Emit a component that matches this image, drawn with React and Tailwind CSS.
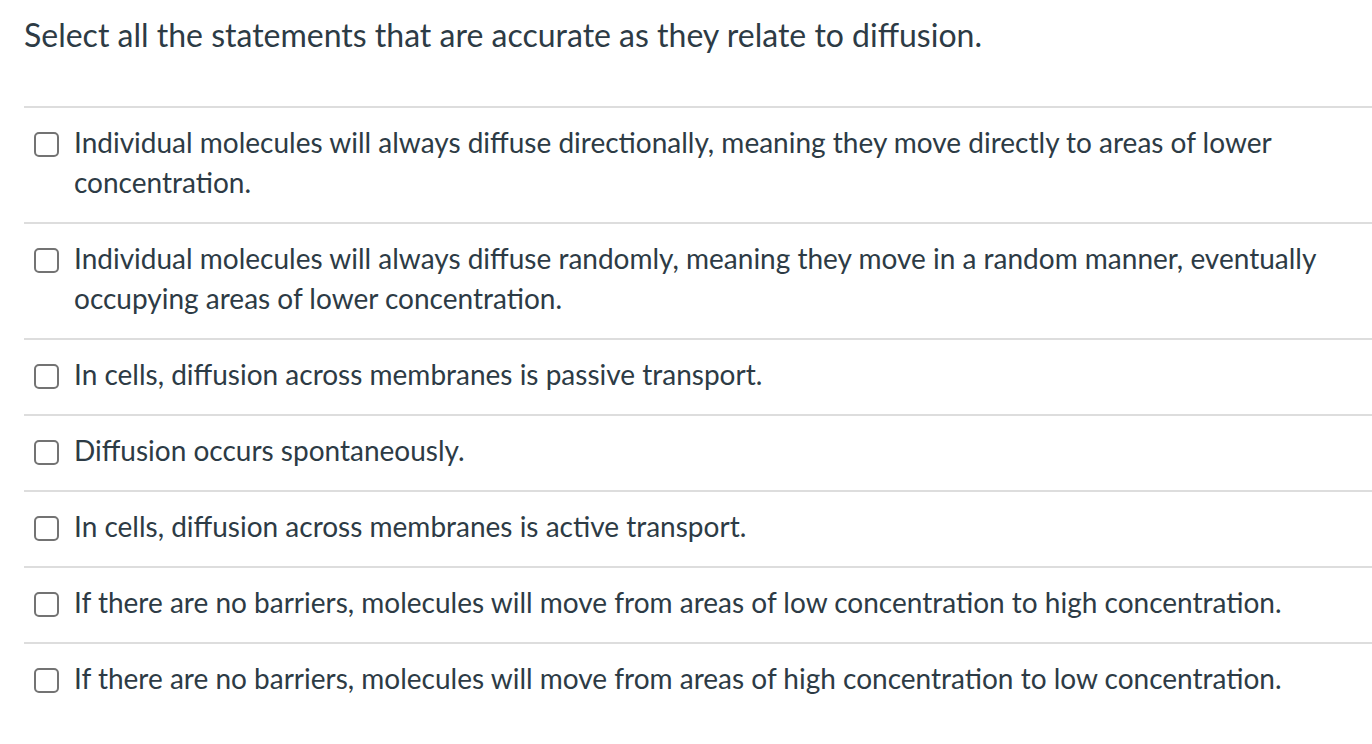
const options = [
  'Individual molecules will always diffuse directionally, meaning they move directly to areas of lower concentration.',
  'Individual molecules will always diffuse randomly, meaning they move in a random manner, eventually occupying areas of lower concentration.',
  'In cells, diffusion across membranes is passive transport.',
  'Diffusion occurs spontaneously.',
  'In cells, diffusion across membranes is active transport.',
  'If there are no barriers, molecules will move from areas of low concentration to high concentration.',
  'If there are no barriers, molecules will move from areas of high concentration to low concentration.',
];

export default function App() {
  return (
    <div
      className="min-h-screen bg-white pl-6 text-[#2d3b45]"
      style={{ fontFamily: "Lato, 'Liberation Sans', sans-serif" }}
    >
      <h1 className="pt-[15px] text-[32px] leading-[40px] font-normal">
        Select all the statements that are accurate as they relate to diffusion.
      </h1>
      <div className="mt-[51px]">
        {options.map((text, i) => (
          <label
            key={i}
            className="flex items-start border-t-2 border-[#dddddd] pt-[14px] pb-[20px] pl-[10px] pr-[50px]"
          >
            <span className="mt-[10px] mr-[15px] block h-[25px] w-[25px] shrink-0 rounded-[5px] border-2 border-[#737373] bg-white" />
            <span className="text-[28px] leading-[40px]">{text}</span>
          </label>
        ))}
      </div>
    </div>
  );
}
